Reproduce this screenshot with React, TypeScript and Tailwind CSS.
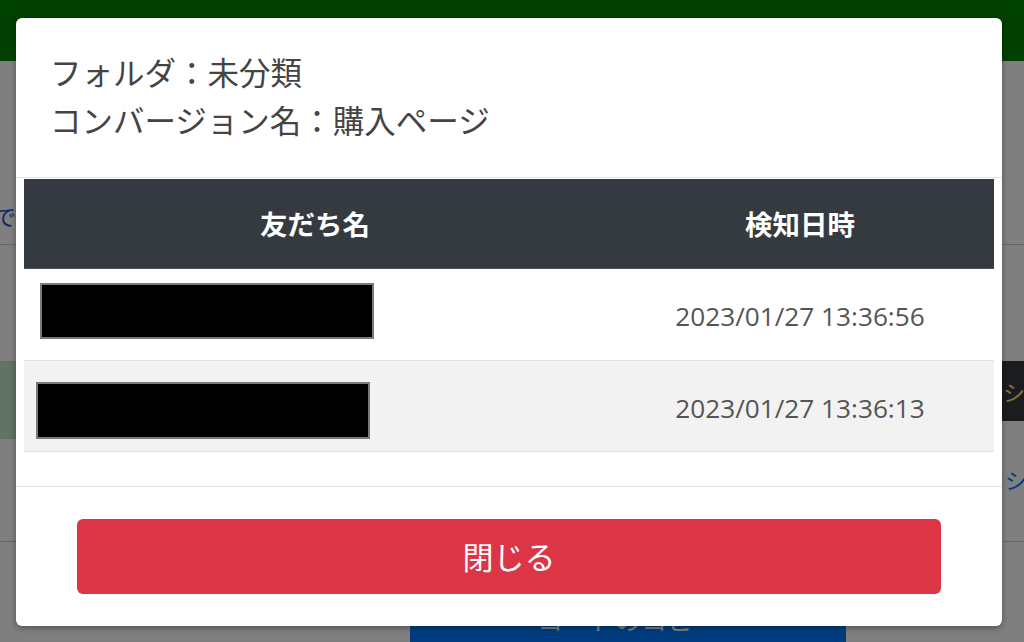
import React from 'react';

const jp = "font-['Noto_Sans_CJK_JP',sans-serif]";
const num = "font-['Open_Sans','Noto_Sans_CJK_JP',sans-serif]";

const detections = [
  { id: 1, date: '2023/01/27 13:36:56', row: 'h-[92px] bg-white', box: 'mt-[14px] ml-[16px] h-[56px]' },
  { id: 2, date: '2023/01/27 13:36:13', row: 'h-[91px] bg-[#f2f2f2]', box: 'mt-[21px] ml-[12px] h-[57px]' },
];

function BackgroundPage() {
  return (
    <div className={`${jp} text-[16px]`}>
      {/* navbar */}
      <div className="h-[61px] bg-[#008000]" />

      {/* page body behind the modal */}
      <div className="flex h-[184px] items-end border-b border-[#ccc] pb-[18px]">
        <span className="text-[22px] leading-none text-[#1d4ed8] -ml-[6px]">で</span>
      </div>
      <div className="h-[116px]" />
      <div className="flex h-[78px]">
        <div className="flex-1 bg-[#c3e6cb]" />
        <div className="w-[24px] bg-white">
          <div className="flex h-[60px] items-center overflow-hidden bg-[#343a40] pl-[3px] text-[22px] text-[#ffe08a] whitespace-nowrap">
            シェア
          </div>
        </div>
      </div>
      <div className="flex h-[103px] justify-end border-b border-[#ccc]">
        <span className="mt-[24px] w-[22px] overflow-hidden whitespace-nowrap pl-[3px] text-[22px] text-[#007bff]">
          シリアル
        </span>
      </div>
      <div className="h-[54px]" />
      <div className="ml-[410px] flex h-[86px] w-[436px] justify-center bg-[#007bff] pt-[3px] text-[26px] text-white">
        コードのコピー
      </div>
    </div>
  );
}

function DetectionModal() {
  return (
    <div className="w-[986px] overflow-hidden rounded-[6px] bg-white shadow-[0_2px_6px_rgba(0,0,0,0.35)]">
      {/* header */}
      <div className={`${jp} border-b border-[#dee2e6] pl-[34px] pt-[29px] pb-[34px] text-[31.5px] leading-[48px] text-[#444]`}>
        <p>フォルダ：未分類</p>
        <p>コンバージョン名：購入ページ</p>
      </div>

      {/* body */}
      <div className="px-[8px] pt-[1px] pb-[34px]">
        <div className="grid h-[90px] grid-cols-[582px_1fr] items-center border-b border-[#4b5259] bg-[#343a40] text-center">
          <span className={`${jp} text-[27.5px] font-bold text-white`}>友だち名</span>
          <span className={`${jp} text-[27.5px] font-bold text-white`}>検知日時</span>
        </div>
        {detections.map((d) => (
          <div key={d.id} className={`grid grid-cols-[582px_1fr] border-b border-[#dee2e6] ${d.row}`}>
            <div>
              <div className={`w-[334px] border-2 border-[#7a7a7a] bg-black ${d.box}`} />
            </div>
            <div className={`${num} flex items-center justify-center pt-[5px] text-[26.2px] text-[#555]`}>{d.date}</div>
          </div>
        ))}
      </div>

      {/* footer */}
      <div className="border-t border-[#dee2e6] px-[61px] pt-[32px] pb-[32px]">
        <button className={`${jp} h-[75px] w-full rounded-[6px] bg-[#dc3545] text-[31px] text-white`}>閉じる</button>
      </div>
    </div>
  );
}

export default function App() {
  return (
    <div className="relative h-[642px] w-full overflow-hidden bg-white">
      <BackgroundPage />
      <div className="absolute inset-0 bg-black/50 pl-[16px] pt-[18px]">
        <DetectionModal />
      </div>
    </div>
  );
}
